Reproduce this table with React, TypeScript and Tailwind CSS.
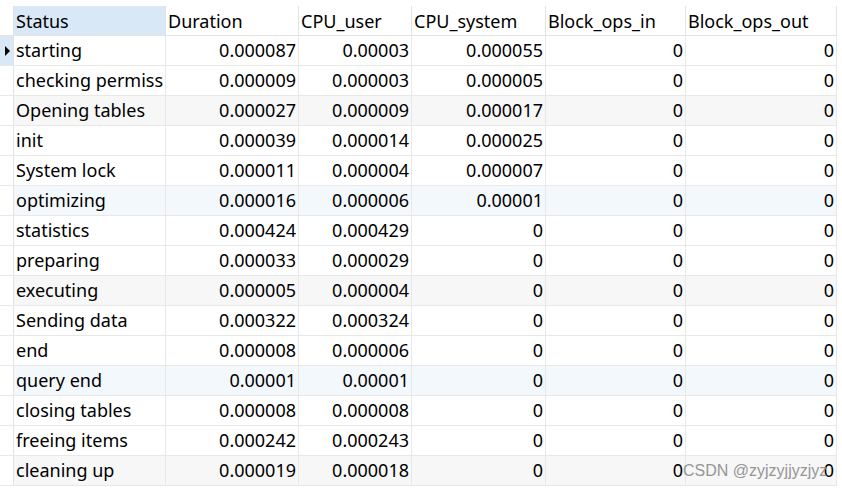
import React from "react";

const rows: [string, string, string, string, string, string][] = [
  ["starting", "0.000087", "0.00003", "0.000055", "0", "0"],
  ["checking permissions", "0.000009", "0.000003", "0.000005", "0", "0"],
  ["Opening tables", "0.000027", "0.000009", "0.000017", "0", "0"],
  ["init", "0.000039", "0.000014", "0.000025", "0", "0"],
  ["System lock", "0.000011", "0.000004", "0.000007", "0", "0"],
  ["optimizing", "0.000016", "0.000006", "0.00001", "0", "0"],
  ["statistics", "0.000424", "0.000429", "0", "0", "0"],
  ["preparing", "0.000033", "0.000029", "0", "0", "0"],
  ["executing", "0.000005", "0.000004", "0", "0", "0"],
  ["Sending data", "0.000322", "0.000324", "0", "0", "0"],
  ["end", "0.000008", "0.000006", "0", "0", "0"],
  ["query end", "0.00001", "0.00001", "0", "0", "0"],
  ["closing tables", "0.000008", "0.000008", "0", "0", "0"],
  ["freeing items", "0.000242", "0.000243", "0", "0", "0"],
  ["cleaning up", "0.000019", "0.000018", "0", "0", "0"],
];

const widths = ["w-[152px]", "w-[133px]", "w-[113px]", "w-[134px]", "w-[140px]", "w-[151px]"];
const headers = ["Status", "Duration", "CPU_user", "CPU_system", "Block_ops_in", "Block_ops_out"];

export default function App() {
  return (
    <div
      className="relative w-[842px] h-[493px] bg-white text-black overflow-hidden pt-[6px]"
      style={{ fontFamily: '"Noto Sans", "Open Sans", sans-serif' }}
    >
      <div className="w-[837px] text-[18px] leading-none">
        {/* header */}
        <div className="flex h-[30px] border-b border-[#e3e3e3]">
          <div className="w-[14px] shrink-0 border-r border-[#e3e3e3] bg-white" />
          {headers.map((h, i) => (
            <div
              key={h}
              className={`${widths[i]} shrink-0 border-r border-[#e3e3e3] flex items-center pl-[2px] overflow-hidden whitespace-nowrap ${
                i === 0 ? "bg-[#d9e8f7]" : "bg-white"
              }`}
            >
              {h}
            </div>
          ))}
        </div>
        {rows.map((r, ri) => {
          const bg =
            ri % 3 === 2 ? (ri % 6 === 2 ? "bg-[#f7f7f7]" : "bg-[#f3f8fd]") : "bg-white";
          return (
            <div key={ri} className={`flex h-[30px] border-b border-[#e8e8e8] ${bg}`}>
              <div
                className={`w-[14px] shrink-0 border-r border-[#e3e3e3] flex items-center pl-[5px] ${
                  ri === 0 ? "bg-[#d9e8f7]" : "bg-white"
                }`}
              >
                {ri === 0 && (
                  <svg width="5" height="10" viewBox="0 0 5 10">
                    <polygon points="0,0 5,5 0,10" fill="#000" />
                  </svg>
                )}
              </div>
              {r.map((c, ci) => (
                <div
                  key={ci}
                  className={`${widths[ci]} shrink-0 border-r border-[#e8e8e8] flex items-center pb-[2px] overflow-hidden whitespace-nowrap ${
                    ci === 0 ? "pl-[2px] justify-start" : "pr-[2px] justify-end"
                  }`}
                >
                  {ci === 0 ? (
                    <span className="block w-[148px] overflow-hidden leading-[24px]">{c}</span>
                  ) : (
                    c
                  )}
                </div>
              ))}
            </div>
          );
        })}
      </div>
      <div
        className="absolute left-[683px] top-[463px] text-[16px] leading-none text-[#8c8c8c] opacity-90 whitespace-nowrap"
        style={{ fontFamily: '"Liberation Sans", Arial, sans-serif' }}
      >
        CSDN @zyjzyjjyzjyz
      </div>
    </div>
  );
}
